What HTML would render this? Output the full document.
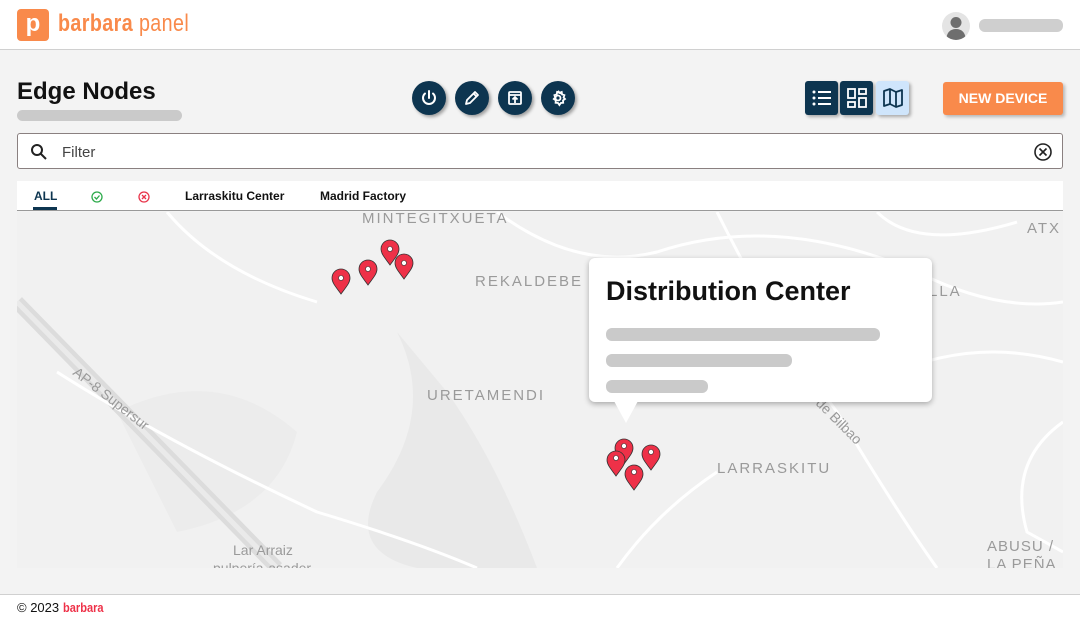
<!DOCTYPE html>
<html><head><meta charset="utf-8"><style>
*{margin:0;padding:0;box-sizing:border-box}
body{width:1080px;height:622px;background:#f3f3f3;font-family:"Liberation Sans",sans-serif;position:relative;overflow:hidden}
.hdr{position:absolute;left:0;top:0;width:1080px;height:50px;background:#fff;border-bottom:1px solid #d0d0d0}
.logo{position:absolute;left:17px;top:9px;width:32px;height:32px;background:#f98a4b;border-radius:4px;color:#fff;font-weight:bold;font-size:24px;text-align:center;line-height:30px}
.brand{position:absolute;left:58px;top:10px;font-size:24px;color:#f98a4b;letter-spacing:0.5px;transform:scaleX(0.82);transform-origin:left top;white-space:nowrap}
.circ{position:absolute;top:81px;width:34px;height:34px;border-radius:50%;background:#0d3550;box-shadow:2px 2px 3px rgba(0,0,0,.35)}
.circ svg{position:absolute;left:8px;top:8px}
.sq{position:absolute;top:81px;width:33px;height:34px;border-radius:3px;background:#0d3550;box-shadow:2px 2px 3px rgba(0,0,0,.3)}
.sq svg{position:absolute;left:6px;top:6px}
.tab{position:absolute;top:189px;font-size:12px;font-weight:bold;color:#111}
.footer{position:absolute;left:0;top:594px;width:1080px;height:28px;background:#fff;border-top:1px solid #d0d0d0}
</style></head><body>
<div class="hdr">
<div class="logo">p</div>
<div class="brand"><b>barbara</b> <span style="font-weight:300">panel</span></div>
<div style="position:absolute;left:942px;top:12px;width:28px;height:28px;border-radius:50%;background:#e4e4e4;overflow:hidden">
<svg width="28" height="28"><circle cx="14" cy="10.5" r="5.5" fill="#6e6e6e"/><path d="M4 28 Q5 17 14 17 Q23 17 24 28Z" fill="#6e6e6e"/></svg></div>
<div style="position:absolute;left:979px;top:19px;width:84px;height:13px;border-radius:6px;background:#cfcfcf"></div>
</div>
<div style="position:absolute;left:17px;top:78px;font-size:24px;font-weight:bold;color:#111">Edge Nodes</div>
<div style="position:absolute;left:17px;top:110px;width:165px;height:11px;border-radius:6px;background:#cacaca"></div>

<div class="circ" style="left:412px"><svg width="18" height="18" fill="none" stroke="#fff" stroke-width="2" stroke-linecap="round"><path d="M9 2v7"/><path d="M5 4.5a6 6 0 1 0 8 0"/></svg></div>
<div class="circ" style="left:455px"><svg width="18" height="18" fill="none" stroke="#fff" stroke-width="1.8" stroke-linejoin="round"><path d="M3 15l1-4 8-8 3 3-8 8z"/><path d="M10.5 4.5l3 3"/></svg></div>
<div class="circ" style="left:498px"><svg width="18" height="18" fill="none" stroke="#fff" stroke-width="1.8"><rect x="3" y="3" width="12" height="12" rx="1"/><path d="M3 6h12M9 14V8M6.5 10.5L9 8l2.5 2.5"/></svg></div>
<div class="circ" style="left:541px"><svg width="18" height="18" fill="none" stroke="#fff" stroke-width="1.8"><circle cx="9" cy="9" r="2.5"/><path d="M9 1.8l1.4 2 2.3-.8.4 2.4 2.3.8-.8 2.3 1.4 1.5-2 1.4.2 2.4-2.4.2-1.4 2-1.4-2-2.4-.2.2-2.4-2-1.4 1.4-1.5-.8-2.3 2.3-.8.4-2.4 2.3.8z"/></svg></div>

<div class="sq" style="left:805px"><svg width="22" height="22" fill="#fff"><circle cx="3" cy="5" r="1.5"/><circle cx="3" cy="11" r="1.5"/><circle cx="3" cy="17" r="1.5"/><rect x="7" y="4" width="13" height="2"/><rect x="7" y="10" width="13" height="2"/><rect x="7" y="16" width="13" height="2"/></svg></div>
<div class="sq" style="left:840px"><svg width="22" height="22" fill="none" stroke="#fff" stroke-width="1.8"><rect x="2" y="2" width="7" height="9"/><rect x="13" y="2" width="7" height="5"/><rect x="2" y="15" width="7" height="5"/><rect x="13" y="11" width="7" height="9"/></svg></div>
<div class="sq" style="left:876px;background:#cfe5fb"><svg width="22" height="22" fill="none" stroke="#0d3550" stroke-width="1.8" stroke-linejoin="round"><path d="M2 4l6-2 6 3 6-2v15l-6 2-6-3-6 2z"/><path d="M8 2v15M14 5v15"/></svg></div>

<div style="position:absolute;left:943px;top:82px;width:120px;height:33px;border-radius:3px;background:#f98a4b;color:#fff;font-weight:bold;font-size:14px;text-align:center;line-height:33px;box-shadow:2px 2px 3px rgba(0,0,0,.25)">NEW DEVICE</div>

<div style="position:absolute;left:17px;top:133px;width:1046px;height:36px;background:#fff;border:1px solid #8a8080;border-radius:3px">
<svg style="position:absolute;left:12px;top:9px" width="18" height="18" fill="none" stroke="#222" stroke-width="2"><circle cx="7" cy="7" r="5"/><path d="M11 11l5 5"/></svg>
<div style="position:absolute;left:44px;top:10px;font-size:15px;color:#444">Filter</div>
<svg style="position:absolute;left:1015px;top:8px" width="20" height="20" fill="none" stroke="#222" stroke-width="1.6"><circle cx="10" cy="10" r="8"/><path d="M6.5 6.5l7 7M13.5 6.5l-7 7"/></svg>
</div>

<div style="position:absolute;left:17px;top:181px;width:1046px;height:30px;background:#fff;border-bottom:1px solid #999"></div>
<div class="tab" style="left:34px;color:#0d3550">ALL</div>
<div style="position:absolute;left:33px;top:207px;width:24px;height:3px;background:#0d3550"></div>
<svg style="position:absolute;left:91px;top:191px" width="12" height="12" fill="none" stroke="#2caa4a" stroke-width="1.3"><circle cx="6" cy="6" r="5"/><path d="M3.5 6l2 2 3-3.5"/></svg>
<svg style="position:absolute;left:138px;top:191px" width="12" height="12" fill="none" stroke="#e8344a" stroke-width="1.3"><circle cx="6" cy="6" r="5"/><path d="M4 4l4 4M8 4l-4 4"/></svg>
<div class="tab" style="left:185px">Larraskitu Center</div>
<div class="tab" style="left:320px">Madrid Factory</div>

<svg style="position:absolute;left:17px;top:212px" width="1046" height="356" font-family="Liberation Sans" font-size="15" fill="#9a9a9a">
<rect width="1046" height="356" fill="#f1f1f1"/>
<path d="M380 120 Q420 200 360 280 Q330 340 400 356 L520 356 Q480 250 430 180Z" fill="#e9e9e9"/>
<path d="M100 200 Q200 150 280 220 Q260 300 160 320Z" fill="#ececec"/>
<path d="M0 90 L260 356" stroke="#dcdcdc" stroke-width="14"/>
<path d="M0 90 L260 356" stroke="#eaeaea" stroke-width="5"/>
<g fill="none" stroke="#fff" stroke-width="3">
<path d="M480 0 Q560 60 640 40 Q760 0 900 60 Q980 100 1046 90"/>
<path d="M700 0 Q760 120 820 200 Q880 300 920 356"/>
<path d="M840 180 Q940 120 1046 150"/>
<path d="M1046 210 Q990 250 1010 320 L1046 340"/>
<path d="M40 160 Q150 230 300 300 Q400 330 460 356"/>
<path d="M600 356 Q640 300 700 260"/>
<path d="M860 0 Q900 40 1000 10"/>
<path d="M150 0 Q200 60 300 90"/>
</g>
<text x="345" y="11" letter-spacing="2">MINTEGITXUETA</text>
<text x="458" y="74" letter-spacing="2">REKALDEBE</text>
<text x="410" y="188" letter-spacing="2">URETAMENDI</text>
<text x="700" y="261" letter-spacing="2">LARRASKITU</text>
<text x="1010" y="21" letter-spacing="2">ATX</text>
<text x="912" y="84" letter-spacing="2">LLA</text>
<text x="970" y="339" letter-spacing="1">ABUSU /</text>
<text x="970" y="357" letter-spacing="1">LA PEÑA</text>
<text x="216" y="343" font-size="14">Lar Arraiz</text>
<text x="196" y="361" font-size="14">pulpería-asader</text>
<text x="0" y="0" font-size="14" transform="translate(55 162) rotate(38)">AP-8 Supersur</text>
<text x="0" y="0" font-size="14" transform="translate(798 192) rotate(45)">de Bilbao</text>
<g fill="#ee3148" stroke="#333" stroke-width="0.8">
<path id="p" d="M0 0 C-5 -7 -9 -11 -9 -16 A9 9 0 0 1 9 -16 C9 -11 5 -7 0 0Z" transform="translate(324 82)"/>
<use href="#p" transform="translate(27 -9)"/><use href="#p" transform="translate(49 -29)"/><use href="#p" transform="translate(63 -15)"/>
<use href="#p" transform="translate(283 170)"/><use href="#p" transform="translate(275 182)"/><use href="#p" transform="translate(310 176)"/><use href="#p" transform="translate(293 196)"/>
</g>
<g fill="#fff" stroke="#333" stroke-width="0.6"><circle cx="324" cy="66" r="2.5"/><circle cx="351" cy="57" r="2.5"/><circle cx="373" cy="37" r="2.5"/><circle cx="387" cy="51" r="2.5"/><circle cx="607" cy="234" r="2.5"/><circle cx="599" cy="246" r="2.5"/><circle cx="634" cy="240" r="2.5"/><circle cx="617" cy="260" r="2.5"/></g>
</svg>

<div style="position:absolute;left:589px;top:258px;width:343px;height:144px;background:#fff;border-radius:6px;box-shadow:0 2px 6px rgba(0,0,0,.3)">
<div style="position:absolute;left:17px;top:18px;font-size:27px;font-weight:bold;color:#111">Distribution Center</div>
<div style="position:absolute;left:17px;top:70px;width:274px;height:13px;border-radius:6px;background:#cacaca"></div>
<div style="position:absolute;left:17px;top:96px;width:186px;height:13px;border-radius:6px;background:#cacaca"></div>
<div style="position:absolute;left:17px;top:122px;width:102px;height:13px;border-radius:6px;background:#cacaca"></div>
</div>
<div style="position:absolute;left:614px;top:401px;width:0;height:0;border-left:12px solid transparent;border-right:12px solid transparent;border-top:22px solid #fff"></div>

<div class="footer"><div style="position:absolute;left:17px;top:5px;font-size:13px;color:#111">© 2023 <span style="color:#ee3148;font-weight:bold;display:inline-block;transform:scaleX(0.85);transform-origin:left">barbara</span></div></div>
</body></html>
